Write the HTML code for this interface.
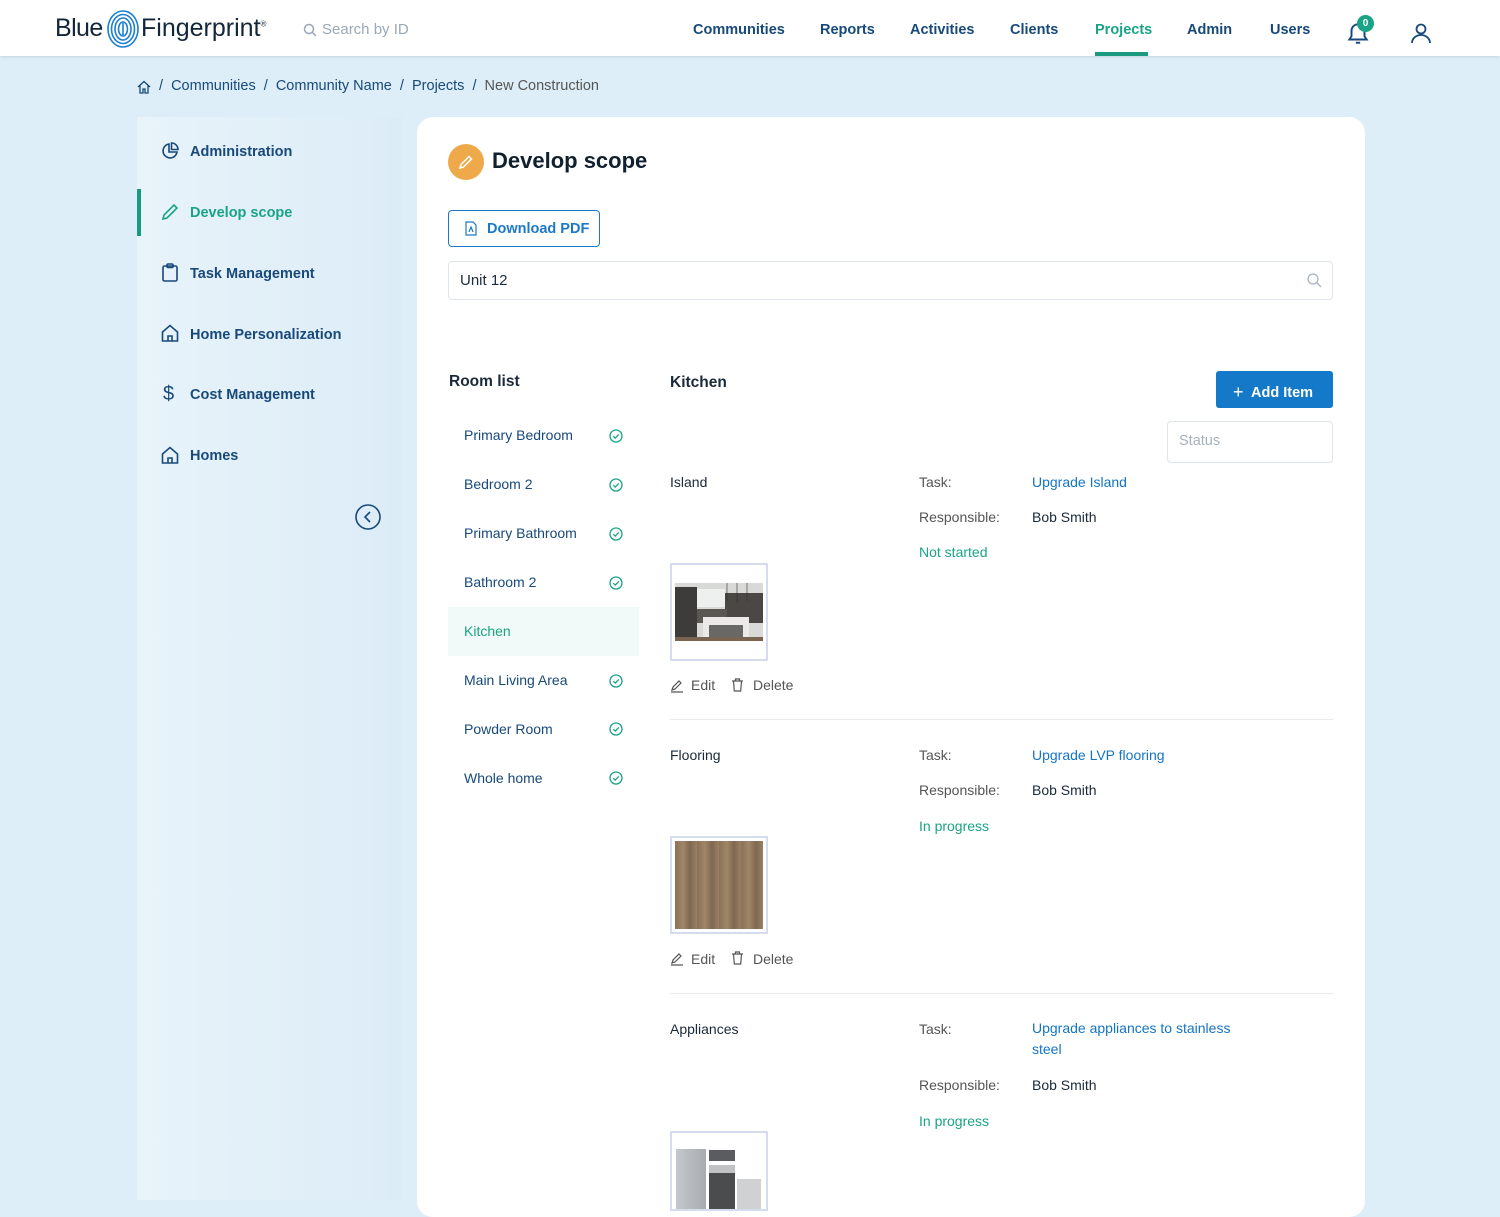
<!DOCTYPE html>
<html><head><meta charset="utf-8"><style>
*{box-sizing:border-box;margin:0;padding:0}
body{width:1500px;height:1200px;overflow:hidden;background:#deeef8;font-family:"Liberation Sans","DejaVu Sans",sans-serif;color:#1b2a3a;position:relative}
.a{position:absolute;white-space:nowrap}
.hdr{position:absolute;left:0;top:0;width:1500px;height:56px;background:#fff;box-shadow:0 1px 3px rgba(0,40,80,.12)}
.nav{font-size:14.5px;color:#17497a;font-weight:bold;top:22px}
.side{position:absolute;left:137px;top:117px;width:265px;height:1083px;background:linear-gradient(90deg,#e8f3fa,#dcecf7)}
.si{font-size:14.5px;font-weight:bold;color:#17497a;left:190px}
.card{position:absolute;left:417px;top:117px;width:948px;height:1100px;background:#fff;border-radius:16px}
.room{font-size:14px;color:#17497a;left:464px}
.lbl{font-size:14px;color:#555}
.blue{color:#1574c4}
.green{color:#1aa386}
.thumb{position:absolute;width:98px;height:98px;border:2px solid #d4dced;background:#fff;overflow:hidden}
.sep{position:absolute;left:670px;width:663px;height:1px;background:#e7ebef}
.ed{font-size:14px;color:#555}
</style></head><body>
<div class="hdr"></div>
<div class="a" style="left:55px;top:14px;font-size:25px;color:#13263a;letter-spacing:-0.6px">Blue</div>
<svg class="a" style="left:106px;top:9px" width="34" height="40" viewBox="0 0 34 40" fill="none" stroke="#1d7fd0" stroke-width="1.6"><ellipse cx="17" cy="20" rx="15" ry="18"/><ellipse cx="17" cy="20" rx="11.5" ry="14.5"/><ellipse cx="17" cy="20" rx="8" ry="11"/><ellipse cx="17" cy="20" rx="4.5" ry="7"/><path d="M17 14v12"/></svg>
<div class="a" style="left:141px;top:14px;font-size:25px;color:#13263a;letter-spacing:0px">Fingerprint<sup style="font-size:8px">®</sup></div>
<svg class="a" style="left:303px;top:23px" width="14" height="14" viewBox="0 0 14 14" fill="none" stroke="#9aa8b8" stroke-width="1.5"><circle cx="6" cy="6" r="4.5"/><path d="M9.5 9.5L13 13"/></svg>
<div class="a" style="left:322px;top:21px;font-size:15px;color:#9aa8b8">Search by ID</div>
<div class="a nav" style="left:693px">Communities</div>
<div class="a nav" style="left:820px">Reports</div>
<div class="a nav" style="left:910px">Activities</div>
<div class="a nav" style="left:1010px">Clients</div>
<div class="a nav" style="left:1095px;color:#1aa386">Projects</div>
<div class="a" style="left:1095px;top:52px;width:53px;height:4px;background:#1a9a7e"></div>
<div class="a nav" style="left:1187px">Admin</div>
<div class="a nav" style="left:1270px">Users</div>
<svg class="a" style="left:1346px;top:20px" width="24" height="26" viewBox="0 0 22 24" fill="none" stroke="#17497a" stroke-width="1.8"><path d="M3 18h16l-2-3v-5a6 6 0 0 0-12 0v5z"/><path d="M9 21h4"/></svg>
<div class="a" style="left:1357px;top:15px;width:17px;height:17px;border-radius:50%;background:#1aa386;color:#fff;font-size:10px;font-weight:bold;text-align:center;line-height:17px">0</div>
<svg class="a" style="left:1410px;top:22px" width="22" height="22" viewBox="0 0 22 22" fill="none" stroke="#17497a" stroke-width="1.8"><circle cx="11" cy="7" r="4.5"/><path d="M2 21a9 8 0 0 1 18 0"/></svg>

<svg class="a" style="left:137px;top:80px" width="14" height="14" viewBox="0 0 14 14" fill="none" stroke="#17497a" stroke-width="1.3"><path d="M1 7L7 1.5 13 7M3 5.5V13h3V9h2v4h3V5.5"/></svg>
<div class="a" style="left:159px;top:78px;font-size:14.5px;color:#17497a">/ &nbsp;Communities &nbsp;/ &nbsp;Community Name &nbsp;/ &nbsp;Projects &nbsp;/ &nbsp;<span style="color:#555">New Construction</span></div>

<div class="side"></div>
<div class="a" style="left:137px;top:189px;width:4px;height:47px;background:#1a9a7e"></div>
<svg class="a" style="left:161px;top:142px" width="18" height="18" viewBox="0 0 18 18" fill="none" stroke="#17497a" stroke-width="1.6"><path d="M8 2a7 7 0 1 0 8 8H8z"/><path d="M10.5 1v6.5H17A6.5 6.5 0 0 0 10.5 1z"/></svg>
<div class="a si" style="top:144px">Administration</div>
<svg class="a" style="left:161px;top:203px" width="18" height="18" viewBox="0 0 18 18" fill="none" stroke="#1aa386" stroke-width="1.6"><path d="M2 16l1-4L13 2l3 3L6 15z"/></svg>
<div class="a si" style="top:205px;color:#1aa386">Develop scope</div>
<svg class="a" style="left:162px;top:263px" width="16" height="19" viewBox="0 0 16 19" fill="none" stroke="#17497a" stroke-width="1.6"><rect x="1" y="3" width="14" height="15" rx="1.5"/><rect x="5" y="1" width="6" height="3.5" rx="1"/></svg>
<div class="a si" style="top:266px">Task Management</div>
<svg class="a" style="left:161px;top:324px" width="18" height="18" viewBox="0 0 18 18" fill="none" stroke="#17497a" stroke-width="1.6"><path d="M1.5 8L9 1.5 16.5 8v9h-15z"/><path d="M7 17v-5h4v5"/></svg>
<div class="a si" style="top:327px">Home Personalization</div>
<div class="a" style="left:163px;top:383px;font-size:20px;color:#17497a">$</div>
<div class="a si" style="top:387px">Cost Management</div>
<svg class="a" style="left:161px;top:446px" width="18" height="18" viewBox="0 0 18 18" fill="none" stroke="#17497a" stroke-width="1.6"><path d="M1.5 8L9 1.5 16.5 8v9h-15z"/><path d="M7 17v-5h4v5"/></svg>
<div class="a si" style="top:448px">Homes</div>
<svg class="a" style="left:355px;top:504px" width="26" height="26" viewBox="0 0 26 26" fill="none" stroke="#17497a" stroke-width="1.6"><circle cx="13" cy="13" r="12"/><path d="M15 8l-5 5 5 5"/></svg>

<div class="card"></div>
<div class="a" style="left:448px;top:144px;width:36px;height:36px;border-radius:50%;background:#eeaa4a"></div>
<svg class="a" style="left:458px;top:154px" width="16" height="16" viewBox="0 0 16 16" fill="none" stroke="#fff" stroke-width="1.5"><path d="M2 14l1-3.5L11 2.5l2.5 2.5-8 8z"/></svg>
<div class="a" style="left:492px;top:148px;font-size:22px;font-weight:bold;color:#10202f">Develop scope</div>
<div class="a" style="left:448px;top:210px;width:152px;height:37px;border:1.5px solid #1c78c8;border-radius:4px"></div>
<svg class="a" style="left:465px;top:221px" width="12" height="15" viewBox="0 0 12 15" fill="none" stroke="#1c78c8" stroke-width="1.2"><path d="M1 1h7l3 3v10H1z"/><path d="M4 11l2-5 2 5"/></svg>
<div class="a" style="left:487px;top:221px;font-size:14.5px;font-weight:bold;color:#1c78c8">Download PDF</div>
<div class="a" style="left:448px;top:261px;width:885px;height:39px;border:1px solid #dfe3ea;border-radius:4px"></div>
<div class="a" style="left:460px;top:272px;font-size:15px">Unit 12</div>
<svg class="a" style="left:1307px;top:273px" width="15" height="15" viewBox="0 0 15 15" fill="none" stroke="#aab4c0" stroke-width="1.3"><circle cx="6" cy="6" r="5"/><path d="M9.5 9.5L14 14"/></svg>

<div class="a" style="left:449px;top:373px;font-size:15.5px;font-weight:bold">Room list</div>
<div class="a" style="left:670px;top:374px;font-size:15.5px;font-weight:bold">Kitchen</div>
<div class="a" style="left:1216px;top:371px;width:117px;height:37px;background:#1379c8;border-radius:3px"></div>
<div class="a" style="left:1233px;top:381px;font-size:14.5px;font-weight:bold;color:#fff"><span style="font-weight:normal;font-size:18px;position:relative;top:1px">+</span>&nbsp; Add Item</div>
<div class="a" style="left:1167px;top:421px;width:166px;height:42px;border:1px solid #dfe3ea;border-radius:4px"></div>
<div class="a" style="left:1179px;top:433px;font-size:14.5px;color:#a6b0bc">Status</div>

<div class="a" style="left:448px;top:607px;width:191px;height:49px;background:#f1faf8"></div>
<div class="a room" style="top:427px">Primary Bedroom</div>
<div class="a room" style="top:476px">Bedroom 2</div>
<div class="a room" style="top:525px">Primary Bathroom</div>
<div class="a room" style="top:574px">Bathroom 2</div>
<div class="a room" style="top:623px;color:#1aa386">Kitchen</div>
<div class="a room" style="top:672px">Main Living Area</div>
<div class="a room" style="top:721px">Powder Room</div>
<div class="a room" style="top:770px">Whole home</div>
<svg width="0" height="0" style="position:absolute"><defs><g id="ck" fill="none" stroke="#1aa386" stroke-width="1.3"><circle cx="7" cy="7" r="6"/><path d="M4.3 7.2l1.9 1.9 3.6-3.7"/></g></defs></svg>
<svg class="a" style="left:609px;top:429px" width="14" height="14"><use href="#ck"/></svg>
<svg class="a" style="left:609px;top:478px" width="14" height="14"><use href="#ck"/></svg>
<svg class="a" style="left:609px;top:527px" width="14" height="14"><use href="#ck"/></svg>
<svg class="a" style="left:609px;top:576px" width="14" height="14"><use href="#ck"/></svg>
<svg class="a" style="left:609px;top:674px" width="14" height="14"><use href="#ck"/></svg>
<svg class="a" style="left:609px;top:722px" width="14" height="14"><use href="#ck"/></svg>
<svg class="a" style="left:609px;top:771px" width="14" height="14"><use href="#ck"/></svg>

<!-- Item 1 -->
<div class="a" style="left:670px;top:474px;font-size:14px">Island</div>
<div class="a lbl" style="left:919px;top:474px">Task:</div>
<div class="a blue" style="left:1032px;top:474px;font-size:14px">Upgrade Island</div>
<div class="a lbl" style="left:919px;top:509px">Responsible:</div>
<div class="a" style="left:1032px;top:509px;font-size:14px">Bob Smith</div>
<div class="a green" style="left:919px;top:544px;font-size:14px">Not started</div>
<div class="thumb" style="left:670px;top:563px"><svg style="position:absolute;left:3px;top:18px" width="88" height="58" viewBox="0 0 88 58"><rect width="88" height="58" fill="#d9d9d7"/><rect x="20" y="6" width="30" height="18" fill="#eef0f0"/><rect x="50" y="10" width="38" height="30" fill="#4a4745"/><rect x="0" y="4" width="22" height="50" fill="#3e3c3a"/><rect x="22" y="26" width="30" height="14" fill="#5a5652"/><rect x="28" y="34" width="46" height="20" fill="#eceae8"/><rect x="34" y="42" width="34" height="12" fill="#6a6866"/><rect x="0" y="54" width="88" height="4" fill="#7a6450"/><path d="M52 0v18M62 0v20M72 0v18" stroke="#333" stroke-width=".6"/></svg></div>
<svg class="a" style="left:670px;top:679px" width="14" height="14" viewBox="0 0 14 14" fill="none" stroke="#555" stroke-width="1.2"><path d="M2 11l1-3 6-6 2 2-6 6zM1 13h12"/></svg>
<div class="a ed" style="left:691px;top:677px">Edit</div>
<svg class="a" style="left:731px;top:678px" width="13" height="14" viewBox="0 0 13 14" fill="none" stroke="#555" stroke-width="1.2"><path d="M1 3h11M4.5 3V1h4v2M2.5 3l.8 10h6.4l.8-10"/></svg>
<div class="a ed" style="left:753px;top:677px">Delete</div>
<div class="sep" style="top:719px"></div>

<!-- Item 2 -->
<div class="a" style="left:670px;top:747px;font-size:14px">Flooring</div>
<div class="a lbl" style="left:919px;top:747px">Task:</div>
<div class="a blue" style="left:1032px;top:747px;font-size:14px">Upgrade LVP flooring</div>
<div class="a lbl" style="left:919px;top:782px">Responsible:</div>
<div class="a" style="left:1032px;top:782px;font-size:14px">Bob Smith</div>
<div class="a green" style="left:919px;top:818px;font-size:14px">In progress</div>
<div class="thumb" style="left:670px;top:836px"><div style="position:absolute;left:3px;top:3px;width:88px;height:88px;background:repeating-linear-gradient(90deg,#8a7258 0,#a08668 8px,#7e6850 15px,#9a8064 22px)"></div></div>
<svg class="a" style="left:670px;top:952px" width="14" height="14" viewBox="0 0 14 14" fill="none" stroke="#555" stroke-width="1.2"><path d="M2 11l1-3 6-6 2 2-6 6zM1 13h12"/></svg>
<div class="a ed" style="left:691px;top:951px">Edit</div>
<svg class="a" style="left:731px;top:951px" width="13" height="14" viewBox="0 0 13 14" fill="none" stroke="#555" stroke-width="1.2"><path d="M1 3h11M4.5 3V1h4v2M2.5 3l.8 10h6.4l.8-10"/></svg>
<div class="a ed" style="left:753px;top:951px">Delete</div>
<div class="sep" style="top:993px"></div>

<!-- Item 3 -->
<div class="a" style="left:670px;top:1021px;font-size:14px">Appliances</div>
<div class="a lbl" style="left:919px;top:1021px">Task:</div>
<div class="a blue" style="left:1032px;font-size:14px;line-height:21px;white-space:normal;width:220px;top:1018px">Upgrade appliances to stainless steel</div>
<div class="a lbl" style="left:919px;top:1077px">Responsible:</div>
<div class="a" style="left:1032px;top:1077px;font-size:14px">Bob Smith</div>
<div class="a green" style="left:919px;top:1113px;font-size:14px">In progress</div>
<div class="thumb" style="left:670px;top:1131px;height:80px"><div style="position:absolute;left:4px;top:16px;width:30px;height:62px;background:linear-gradient(90deg,#c4c8cc,#a8acb0)"></div><div style="position:absolute;left:37px;top:17px;width:26px;height:11px;background:#5a5c60"></div><div style="position:absolute;left:37px;top:32px;width:26px;height:8px;background:#c0c2c4"></div><div style="position:absolute;left:37px;top:40px;width:26px;height:38px;background:#4a4c4e"></div><div style="position:absolute;left:65px;top:46px;width:24px;height:32px;background:#cfd1d3"></div></div>
</body></html>
